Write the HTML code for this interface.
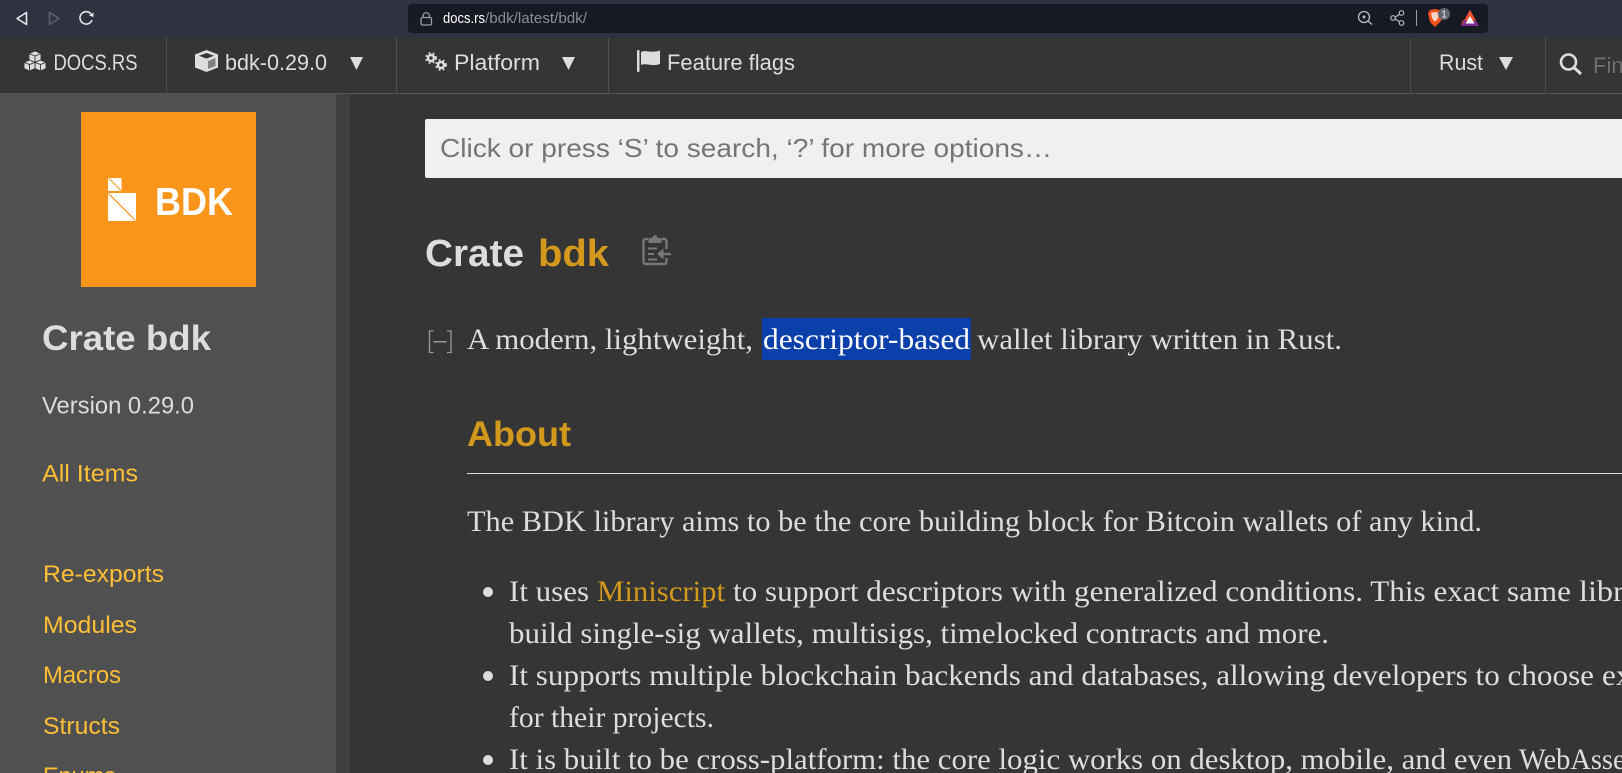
<!DOCTYPE html>
<html><head><meta charset="utf-8"><title>bdk - Rust</title>
<style>
html,body{margin:0;padding:0;background:#353535;overflow:hidden;width:1622px;height:773px}
svg{display:block}
.s{font-family:"Liberation Sans",sans-serif}
.r{font-family:"Liberation Serif",serif;font-size:30px;fill:#ddd}
.n{font-family:"Liberation Sans",sans-serif;font-size:22px;fill:#ddd}
.l{font-family:"Liberation Sans",sans-serif;font-size:24px;fill:#fdbf35}
</style></head><body>
<svg width="1622" height="773" viewBox="0 0 1622 773" xmlns="http://www.w3.org/2000/svg">
<rect width="1622" height="773" fill="#353535"/>
<!-- browser chrome -->
<rect width="1622" height="38" fill="#2f3241"/>
<path d="M26.5 12.5V24.5L17 18.5Z" fill="none" stroke="#e8e8e8" stroke-width="1.6" stroke-linejoin="round"/>
<path d="M49.5 12.5V24.5L59 18.5Z" fill="none" stroke="#5c6070" stroke-width="1.6" stroke-linejoin="round"/>
<path d="M91 14A6.2 6.2 0 1 0 92 20" fill="none" stroke="#e8e8e8" stroke-width="1.6"/>
<path d="M89 15.5L93.5 17V12.5Z" fill="#e8e8e8"/>
<rect x="408" y="4" width="1080" height="29" rx="4" fill="#171a23"/>
<rect x="421" y="17.5" width="10.5" height="7.5" rx="1.5" fill="none" stroke="#9a9da6" stroke-width="1.3"/>
<path d="M423 17.5V15.5A3.3 3.3 0 0 1 429.5 15.5V17.5" fill="none" stroke="#9a9da6" stroke-width="1.3"/>
<text x="443" y="23" class="s" font-size="15" fill="#fff" textLength="42" lengthAdjust="spacingAndGlyphs">docs.rs</text>
<text x="485" y="23" class="s" font-size="15" fill="#8b8e97" textLength="102" lengthAdjust="spacingAndGlyphs">/bdk/latest/bdk/</text>
<circle cx="1364" cy="17" r="5.5" fill="none" stroke="#b9bbc2" stroke-width="1.3"/>
<path d="M1368 21L1372 24.5" stroke="#b9bbc2" stroke-width="1.3"/>
<circle cx="1364" cy="17" r="1.5" fill="#b9bbc2"/>
<path d="M1393.5 18L1401 13.5M1393.5 18L1401 22.5" stroke="#b9bbc2" stroke-width="1.2"/>
<circle cx="1393" cy="18" r="2.3" fill="#171a23" stroke="#b9bbc2" stroke-width="1.2"/>
<circle cx="1401.5" cy="13" r="2.3" fill="#171a23" stroke="#b9bbc2" stroke-width="1.2"/>
<circle cx="1401.5" cy="23" r="2.3" fill="#171a23" stroke="#b9bbc2" stroke-width="1.2"/>
<rect x="1416" y="10" width="1" height="16" fill="#9a9da6"/>
<path d="M1430 10L1435 9L1440 10L1442 13L1441 21L1435 27L1430 22L1428 13Z" fill="#f4511e"/>
<path d="M1431 13L1435 12L1439 13L1438 18L1436 21H1434L1432 18Z" fill="#fbd5c8"/>
<circle cx="1444" cy="14" r="6" fill="#63666f"/>
<text x="1444" y="17.5" class="s" font-size="10" fill="#eee" text-anchor="middle">1</text>
<path d="M1470 10L1479 26H1461Z" fill="#7a2f8f"/>
<path d="M1470 10L1476 20.5H1462.5L1461 26Z" fill="#f0502a"/>
<path d="M1470 16L1474.5 23.5H1465.5Z" fill="#fff"/>
<!-- nav -->
<rect y="38" width="1622" height="55" fill="#353535"/>
<rect y="93" width="1622" height="1" fill="#565656"/>
<rect x="166" y="38" width="1" height="55" fill="#505050"/>
<rect x="396" y="38" width="1" height="55" fill="#505050"/>
<rect x="608" y="38" width="1" height="55" fill="#505050"/>
<rect x="1410" y="38" width="1" height="55" fill="#505050"/>
<rect x="1545" y="38" width="1" height="55" fill="#505050"/>
<g fill="#ddd" stroke="#353535" stroke-width=".9">
<path d="M35 51L41 53.5V60L35 62.5L29 60V53.5Z"/>
<path d="M29.5 60L35.2 62.3V68.5L29.5 71L24 68.5V62.3Z"/>
<path d="M40.5 60L46 62.3V68.5L40.5 71L35 68.5V62.3Z"/>
<path d="M29 53.5L35 56L41 53.5M35 56V62M24 62.3L29.5 64.5L35 62.3M29.5 64.5V71M35 62.3L40.5 64.5L46 62.3M40.5 64.5V71" fill="none"/>
</g>
<text x="53.5" y="70" class="n" textLength="84" lengthAdjust="spacingAndGlyphs">DOCS.RS</text>
<path d="M206.5 50L218 54.5V67.5L206.5 72L195 67.5V54.5Z" fill="#ddd"/>
<path d="M206.5 53L214 55.8L206.5 58.6L199 55.8Z" fill="#353535"/>
<path d="M208 61V69L215.5 66V58Z" fill="#353535" opacity=".55"/>
<text x="225" y="70" class="n" textLength="102" lengthAdjust="spacingAndGlyphs">bdk-0.29.0</text>
<path d="M350 57H363L356.5 70Z" fill="#ddd"/>
<circle cx="431" cy="58" r="3" fill="none" stroke="#ddd" stroke-width="2.5"/>
<circle cx="431" cy="58" r="5" fill="none" stroke="#ddd" stroke-width="1.8" stroke-dasharray="1.8 2.4"/>
<circle cx="441" cy="65" r="3" fill="none" stroke="#ddd" stroke-width="2.5"/>
<circle cx="441" cy="65" r="5" fill="none" stroke="#ddd" stroke-width="1.8" stroke-dasharray="1.8 2.4"/>
<text x="454" y="70" class="n" textLength="86" lengthAdjust="spacingAndGlyphs">Platform</text>
<path d="M562 57H575L568.5 70Z" fill="#ddd"/>
<rect x="637" y="50" width="2.5" height="22" rx="1" fill="#ddd"/>
<path d="M641 52C646 49.5 651 53.5 660 50.5V64C652 67 646 62.5 641 65Z" fill="#ddd"/>
<text x="667" y="70" class="n" textLength="128" lengthAdjust="spacingAndGlyphs">Feature flags</text>
<text x="1439" y="70" class="n" textLength="44" lengthAdjust="spacingAndGlyphs">Rust</text>
<path d="M1499 57H1513L1506 70Z" fill="#ddd"/>
<circle cx="1568.5" cy="62" r="7.5" fill="none" stroke="#ddd" stroke-width="2.6"/>
<path d="M1574 67.5L1581 74" stroke="#ddd" stroke-width="3"/>
<text x="1593" y="73" class="s" font-size="22" fill="#6e6e6e">Find</text>
<!-- sidebar -->
<rect y="94" width="336" height="679" fill="#505050"/>
<rect x="336" y="94" width="14" height="679" fill="#3f3f3f"/>
<rect x="81" y="112" width="175" height="175" fill="#f9951b"/>
<rect x="108" y="178" width="13.5" height="13" fill="#fff"/>
<path d="M109 178.5L121 190.5" stroke="#f9951b" stroke-width="1"/>
<rect x="108" y="193" width="28" height="28" fill="#fff"/>
<path d="M108.5 193.5L135.5 220.5" stroke="#f9951b" stroke-width="1.2"/>
<text x="155" y="215" class="s" font-size="39" font-weight="700" fill="#fff" textLength="78" lengthAdjust="spacingAndGlyphs">BDK</text>
<text x="42" y="350" class="s" font-size="35" font-weight="700" fill="#ddd" textLength="169" lengthAdjust="spacingAndGlyphs">Crate bdk</text>
<text x="42" y="413.5" class="s" font-size="24" fill="#ddd" textLength="152" lengthAdjust="spacingAndGlyphs">Version 0.29.0</text>
<text x="42" y="481.5" class="l" textLength="96" lengthAdjust="spacingAndGlyphs">All Items</text>
<text x="43" y="582" class="l" textLength="121" lengthAdjust="spacingAndGlyphs">Re-exports</text>
<text x="43" y="633" class="l" textLength="94" lengthAdjust="spacingAndGlyphs">Modules</text>
<text x="43" y="683" class="l" textLength="78" lengthAdjust="spacingAndGlyphs">Macros</text>
<text x="43" y="734" class="l" textLength="77" lengthAdjust="spacingAndGlyphs">Structs</text>
<text x="43" y="784" class="l" textLength="73" lengthAdjust="spacingAndGlyphs">Enums</text>
<!-- search -->
<rect x="425" y="119" width="1200" height="59" rx="2" fill="#f0f0f0"/>
<text x="440" y="157" class="s" font-size="26" fill="#757575" textLength="612" lengthAdjust="spacingAndGlyphs">Click or press ‘S’ to search, ‘?’ for more options…</text>
<!-- heading -->
<text x="425" y="266" class="s" font-size="38" font-weight="700" fill="#ddd" textLength="99" lengthAdjust="spacingAndGlyphs">Crate</text>
<text x="538" y="266" class="s" font-size="38" font-weight="700" fill="#d2991d" textLength="71" lengthAdjust="spacingAndGlyphs">bdk</text>
<g fill="none" stroke="#777" stroke-width="2.4">
<path d="M648 239H646Q643.5 239 643.5 241.5V261.5Q643.5 264 646 264H664Q666.5 264 666.5 261.5V258M666.5 249V241.5Q666.5 239 664 239H662"/>
<path d="M649 242.5V238.5H652.5Q655 232.5 657.5 238.5H661V242.5Z" fill="#777" stroke-width="1"/>
<path d="M648 248.5H657M648 254H654M648 259.5H657" stroke-width="2"/>
<path d="M671 254H660"/>
</g>
<path d="M663.5 248.5L657 254L663.5 259.5Z" fill="#777"/>
<!-- toggle -->
<path d="M433.5 331H429.5V352.5H433.5M447 331H451V352.5H447" fill="none" stroke="#999" stroke-width="1.3"/>
<rect x="433.5" y="341" width="13" height="1.5" fill="#999"/>
<!-- doc -->
<text x="467" y="349" class="r" textLength="286" lengthAdjust="spacingAndGlyphs">A modern, lightweight,</text>
<rect x="762" y="318" width="209" height="42" fill="#0b3fa9"/>
<text x="763" y="349" class="r" style="fill:#fff" textLength="207" lengthAdjust="spacingAndGlyphs">descriptor-based</text>
<text x="977" y="349" class="r" textLength="365" lengthAdjust="spacingAndGlyphs">wallet library written in Rust.</text>
<text x="467" y="446" class="s" font-size="35" font-weight="700" fill="#d2991d" textLength="104" lengthAdjust="spacingAndGlyphs">About</text>
<rect x="467" y="473" width="1155" height="1" fill="#ddd"/>
<text x="467" y="531" class="r" textLength="1015" lengthAdjust="spacingAndGlyphs">The BDK library aims to be the core building block for Bitcoin wallets of any kind.</text>
<circle cx="488" cy="592" r="5" fill="#ddd"/>
<text x="509" y="601" class="r" textLength="80" lengthAdjust="spacingAndGlyphs">It uses</text>
<text x="597" y="601" class="r" style="fill:#d2991d" textLength="128" lengthAdjust="spacingAndGlyphs">Miniscript</text>
<text x="733" y="601" class="r" textLength="838" lengthAdjust="spacingAndGlyphs">to support descriptors with generalized conditions. This exact same</text>
<text x="1579" y="601" class="r" textLength="86" lengthAdjust="spacingAndGlyphs">library</text>
<text x="509" y="643" class="r" textLength="820" lengthAdjust="spacingAndGlyphs">build single-sig wallets, multisigs, timelocked contracts and more.</text>
<circle cx="488" cy="676" r="5" fill="#ddd"/>
<text x="509" y="685" class="r" textLength="1085" lengthAdjust="spacingAndGlyphs">It supports multiple blockchain backends and databases, allowing developers to choose</text>
<text x="1602" y="685" class="r" textLength="90" lengthAdjust="spacingAndGlyphs">exactly</text>
<text x="509" y="727" class="r" textLength="205" lengthAdjust="spacingAndGlyphs">for their projects.</text>
<circle cx="488" cy="760" r="5" fill="#ddd"/>
<text x="509" y="769" class="r" textLength="1003" lengthAdjust="spacingAndGlyphs">It is built to be cross-platform: the core logic works on desktop, mobile, and even</text>
<text x="1519" y="769" class="r" textLength="165" lengthAdjust="spacingAndGlyphs">WebAssembly</text>
</svg>
</body></html>
